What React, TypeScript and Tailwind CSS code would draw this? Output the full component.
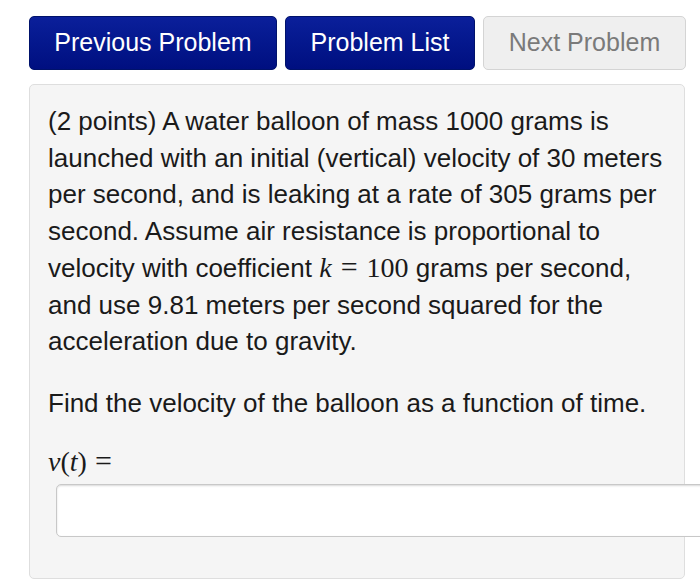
export default function App() {
  const serif = "font-['Liberation_Serif','Times_New_Roman',serif]";
  const lines = [
    "(2 points) A water balloon of mass 1000 grams is",
    "launched with an initial (vertical) velocity of 30 meters",
    "per second, and is leaking at a rate of 305 grams per",
    "second. Assume air resistance is proportional to",
  ];
  return (
    <div className="w-[700px] h-[582px] bg-white font-['Liberation_Sans',Arial,sans-serif] overflow-hidden">
      <div className="pl-[29px] pt-[16px] flex gap-[8px]">
        <button className="w-[248px] h-[54px] rounded-[5px] bg-gradient-to-b from-[#0b1f9a] to-[#000f80] border border-[#00126b] text-white text-[25px]">
          Previous Problem
        </button>
        <button className="w-[190px] h-[54px] rounded-[5px] bg-gradient-to-b from-[#0b1f9a] to-[#000f80] border border-[#00126b] text-white text-[25px]">
          Problem List
        </button>
        <button className="w-[203px] h-[54px] rounded-[5px] bg-[#efefef] border border-[#d4d4d4] text-[#7a7a7a] text-[25px]">
          Next Problem
        </button>
      </div>
      <div className="ml-[29px] mt-[14px] w-[656px] h-[495px] bg-[#f5f5f5] border border-[#dedede] rounded-[5px] pl-[18px] pt-[18px] text-[26px] text-[#1a1a1a] whitespace-nowrap">
        <div className="leading-[36.5px]">
          {lines.map((l) => (
            <div key={l}>{l}</div>
          ))}
          <div>
            velocity with coefficient <span className={`${serif} italic text-[28px]`}>k</span>
            <span className={`${serif} text-[30px] mx-[9px]`}>=</span>
            <span className={`${serif} text-[28px]`}>100</span> grams per second,
          </div>
          <div>and use 9.81 meters per second squared for the</div>
          <div>acceleration due to gravity.</div>
        </div>
        <p className="mt-[25px] leading-[36.5px]">Find the velocity of the balloon as a function of time.</p>
        <div className={`${serif} text-[28px] mt-[24px] leading-[32px]`}>
          <span className="italic">v</span>(<span className="italic">t</span>)
          <span className="ml-[8px] text-[30px]">=</span>
        </div>
        <div className="mt-[6px] ml-[8px] w-[660px] h-[53px] bg-white border border-[#c8c8c8] rounded-[5px] shadow-[inset_0_1px_2px_rgba(0,0,0,0.15)]"></div>
      </div>
    </div>
  );
}
